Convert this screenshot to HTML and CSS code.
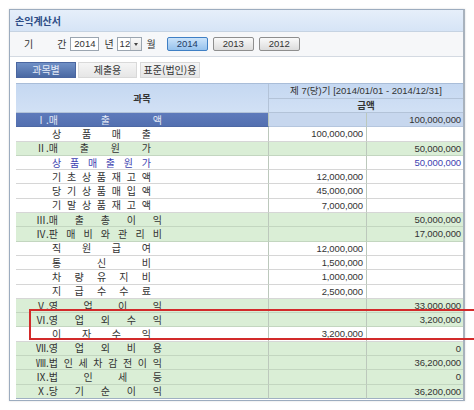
FILE: index.html
```html
<!DOCTYPE html>
<html lang="ko">
<head>
<meta charset="utf-8">
<title>손익계산서</title>
<link rel="stylesheet" href="styles.css">
</head>
<body>
<div class="panel">
  <div class="titlebar">손익계산서</div>
  <div class="toolbar">
    <span class="lab">기</span><span class="lab lab-gap">간</span>
    <span class="inp">2014</span>
    <span class="lab lab-y">년</span>
    <span class="sel"><span class="selv">12</span><span class="selbtn"><span class="tri"></span></span></span>
    <span class="lab lab-m">월</span>
    <button class="yb on">2014</button>
    <button class="yb">2013</button>
    <button class="yb">2012</button>
  </div>
  <div class="tabs">
    <div class="tab on">과목별</div>
    <div class="tab t2">제출용</div>
    <div class="tab t3">표준(법인)용</div>
  </div>
  <div class="tbl">
    <div class="thead">
      <div class="h-subj">과목</div>
      <div class="h-per">제 7(당)기 [2014/01/01 - 2014/12/31]</div>
      <div class="h-amt">금액</div>
    </div>
    <div class="row top"><div class="c1"><span class="lbl main"><span>Ⅰ.매</span><span>출</span><span>액</span></span></div><div class="c2"></div><div class="c3">100,000,000</div></div>
    <div class="row w"><div class="c1"><span class="lbl sub"><span>상</span><span>품</span><span>매</span><span>출</span></span></div><div class="c2">100,000,000</div><div class="c3"></div></div>
    <div class="row g"><div class="c1"><span class="lbl main short"><span>Ⅱ.매</span><span>출</span><span>원</span><span>가</span></span></div><div class="c2"></div><div class="c3">50,000,000</div></div>
    <div class="row w blue"><div class="c1"><span class="lbl sub"><span>상</span><span>품</span><span>매</span><span>출</span><span>원</span><span>가</span></span></div><div class="c2"></div><div class="c3">50,000,000</div></div>
    <div class="row w"><div class="c1"><span class="lbl sub"><span>기</span><span>초</span><span>상</span><span>품</span><span>재</span><span>고</span><span>액</span></span></div><div class="c2">12,000,000</div><div class="c3"></div></div>
    <div class="row w"><div class="c1"><span class="lbl sub"><span>당</span><span>기</span><span>상</span><span>품</span><span>매</span><span>입</span><span>액</span></span></div><div class="c2">45,000,000</div><div class="c3"></div></div>
    <div class="row w"><div class="c1"><span class="lbl sub"><span>기</span><span>말</span><span>상</span><span>품</span><span>재</span><span>고</span><span>액</span></span></div><div class="c2">7,000,000</div><div class="c3"></div></div>
    <div class="row g"><div class="c1"><span class="lbl main"><span>Ⅲ.매</span><span>출</span><span>총</span><span>이</span><span>익</span></span></div><div class="c2"></div><div class="c3">50,000,000</div></div>
    <div class="row g"><div class="c1"><span class="lbl main"><span>Ⅳ.판</span><span>매</span><span>비</span><span>와</span><span>관</span><span>리</span><span>비</span></span></div><div class="c2"></div><div class="c3">17,000,000</div></div>
    <div class="row w"><div class="c1"><span class="lbl sub"><span>직</span><span>원</span><span>급</span><span>여</span></span></div><div class="c2">12,000,000</div><div class="c3"></div></div>
    <div class="row w"><div class="c1"><span class="lbl sub"><span>통</span><span>신</span><span>비</span></span></div><div class="c2">1,500,000</div><div class="c3"></div></div>
    <div class="row w"><div class="c1"><span class="lbl sub"><span>차</span><span>량</span><span>유</span><span>지</span><span>비</span></span></div><div class="c2">1,000,000</div><div class="c3"></div></div>
    <div class="row w"><div class="c1"><span class="lbl sub"><span>지</span><span>급</span><span>수</span><span>수</span><span>료</span></span></div><div class="c2">2,500,000</div><div class="c3"></div></div>
    <div class="row g"><div class="c1"><span class="lbl main"><span>Ⅴ.영</span><span>업</span><span>이</span><span>익</span></span></div><div class="c2"></div><div class="c3">33,000,000</div></div>
    <div class="row g"><div class="c1"><span class="lbl main"><span>Ⅵ.영</span><span>업</span><span>외</span><span>수</span><span>익</span></span></div><div class="c2"></div><div class="c3">3,200,000</div></div>
    <div class="row w"><div class="c1"><span class="lbl sub"><span>이</span><span>자</span><span>수</span><span>익</span></span></div><div class="c2">3,200,000</div><div class="c3"></div></div>
    <div class="row g"><div class="c1"><span class="lbl main"><span>Ⅶ.영</span><span>업</span><span>외</span><span>비</span><span>용</span></span></div><div class="c2"></div><div class="c3">0</div></div>
    <div class="row g"><div class="c1"><span class="lbl main"><span>Ⅷ.법</span><span>인</span><span>세</span><span>차</span><span>감</span><span>전</span><span>이</span><span>익</span></span></div><div class="c2"></div><div class="c3">36,200,000</div></div>
    <div class="row g"><div class="c1"><span class="lbl main"><span>Ⅸ.법</span><span>인</span><span>세</span><span>등</span></span></div><div class="c2"></div><div class="c3">0</div></div>
    <div class="row g last"><div class="c1"><span class="lbl main"><span>Ⅹ.당</span><span>기</span><span>순</span><span>이</span><span>익</span></span></div><div class="c2"></div><div class="c3">36,200,000</div></div>
  </div>
</div>
<div class="mark"></div>
</body>
</html>
```
FILE: styles.css
```css
html, body {
  margin: 0;
  padding: 0;
  overflow: hidden;
}
body {
  position: relative;
  width: 474px;
  height: 410px;
  background: #fff;
  font-family: "Liberation Sans", "Noto Sans CJK KR", sans-serif;
  font-size: 10px;
  color: #333;
}
.panel {
  margin: 9px 0 0 9px;
  width: 453px;
  border: 1px solid #9cacbf;
  border-right: 2px solid #a8b2bd;
  box-shadow: 0 0 2px rgba(0, 0, 0, 0.15);
  background: #fff;
  overflow: hidden;
  padding-bottom: 1px;
}
.titlebar {
  height: 22px;
  box-sizing: border-box;
  background: linear-gradient(#e6effa, #d6e4f6);
  border-bottom: 1px solid #c6d3e2;
  padding-left: 5px;
  line-height: 21px;
  font-family: "Noto Sans CJK KR", sans-serif;
  font-weight: bold;
  font-size: 10px;
  color: #2d4c86;
}
.toolbar {
  height: 25px;
  box-sizing: border-box;
  border-bottom: 1px solid #d4dae2;
  background: #f6f7f9;
  display: flex;
  align-items: center;
  padding-left: 14px;
}
.lab {
  font-family: "Noto Sans CJK KR", sans-serif;
  font-size: 10px;
  line-height: 12px;
  color: #333;
}
.lab-gap { margin-left: 24px; }
.lab-y { margin-left: 5px; }
.lab-m { margin-left: 5px; }
.inp {
  margin-left: 4px;
  width: 29px;
  height: 14px;
  box-sizing: border-box;
  border: 1px solid #9ba5b0;
  background: #fff;
  text-align: center;
  line-height: 12px;
  font-size: 9.5px;
  color: #333;
}
.sel {
  margin-left: 3px;
  width: 25px;
  height: 14px;
  box-sizing: border-box;
  border: 1px solid #9ba5b0;
  background: #fff;
  display: flex;
}
.selv {
  flex: 1;
  padding-left: 2px;
  line-height: 12px;
  font-size: 9.5px;
  color: #333;
}
.selbtn {
  width: 11px;
  border-left: 1px solid #c2c8cf;
  background: linear-gradient(#fafafa, #e4e4e4);
  display: flex;
  align-items: center;
  justify-content: center;
}
.tri {
  width: 0;
  height: 0;
  border-left: 2px solid transparent;
  border-right: 2px solid transparent;
  border-top: 3px solid #444;
}
.yb {
  width: 41px;
  height: 14px;
  margin: 0 0 0 5px;
  padding: 0;
  box-sizing: border-box;
  border: 1px solid #8e8e8e;
  border-radius: 2px;
  background: linear-gradient(#fafafa, #dcdcdc);
  font-family: "Liberation Sans", sans-serif;
  font-size: 9.5px;
  line-height: 12px;
  color: #333;
}
.yb.on {
  margin-left: 11px;
  border-color: #3f7fc4;
  background: linear-gradient(#cbe3fa, #96c2ed);
  color: #1d3b66;
}
.tabs {
  display: flex;
  margin: 5px 0 0 6px;
  height: 16px;
}
.tab {
  width: 60px;
  height: 16px;
  box-sizing: border-box;
  border: 1px solid #d9d9d9;
  background: linear-gradient(#f5f5f5, #e6e6e6);
  text-align: center;
  line-height: 14px;
  font-family: "Noto Sans CJK KR", sans-serif;
  font-size: 10px;
  color: #333;
}
.tab.on {
  border-color: #4a66a0;
  background: linear-gradient(#7090c6, #4a69a3);
  color: #e6ecf8;
}
.tab.t2 { margin-left: 2px; width: 59px; }
.tab.t3 { margin-left: 3px; }
.tbl {
  margin: 5px 0 0 6px;
  width: 447px;
}
.thead {
  display: grid;
  grid-template-columns: 253px 194px;
  grid-template-rows: 15px 14px;
  background: linear-gradient(#c5d8f1, #d2e1f5);
  border-top: 1px solid #a9bdd8;
  box-sizing: border-box;
  font-family: "Noto Sans CJK KR", sans-serif;
  color: #333;
}
.h-subj {
  grid-row: 1 / 3;
  border-right: 1px solid #b3c3d8;
  border-bottom: 1px solid #b3c3d8;
  display: flex;
  align-items: center;
  justify-content: center;
  font-weight: bold;
  font-size: 9.5px;
}
.h-per {
  border-bottom: 1px solid #b3c3d8;
  text-align: center;
  line-height: 13px;
  font-family: "Liberation Sans", "Noto Sans CJK KR", sans-serif;
  font-size: 9.5px;
}
.h-amt {
  border-bottom: 1px solid #b3c3d8;
  text-align: center;
  line-height: 13px;
  font-weight: bold;
  font-size: 9.5px;
}
.row {
  display: grid;
  grid-template-columns: 253px 98px 96px;
  height: 14.3px;
}
.row > div {
  box-sizing: border-box;
  border-bottom: 1px solid #d6d6d6;
  height: 14.3px;
}
.c1, .c2 {
  border-right: 1px solid #bcc8bc;
}
.c2, .c3 {
  text-align: right;
  font-family: "Liberation Sans", sans-serif;
  font-size: 9.5px;
  letter-spacing: -0.1px;
  line-height: 13px;
  color: #333;
}
.c2 { padding-right: 3px; }
.c3 { padding-right: 2px; }
.c1 {
  display: flex;
  align-items: center;
}
.lbl {
  display: flex;
  justify-content: space-between;
  font-family: "Noto Sans CJK KR", sans-serif;
  font-size: 10px;
  line-height: 12px;
  color: #333;
}
.lbl.main { margin-left: 20px; width: 126px; }
.lbl.main.short { width: 115px; }
.lbl.sub { margin-left: 36px; width: 99px; }
.row.w > div { background: #fff; }
.row.g > div { background: #daeed6; border-bottom-color: #c3d6c0; }
.row.top .c1 {
  background: linear-gradient(#5e7abb, #5370b0);
  border-bottom-color: #4d68a4;
}
.row.top .c1 .lbl { color: #e3e9f6; }
.row.top .c2, .row.top .c3 {
  background: #c7d7ee;
  border-bottom-color: #b5c6de;
}
.row.blue .lbl, .row.blue .c3 { color: #3d3fb0; }
.row.last > div { border-bottom: 1px solid #9fb0c2; }
.mark {
  position: absolute;
  left: 29px;
  top: 309px;
  width: 445px;
  height: 31px;
  box-sizing: border-box;
  border: 2px solid #d22a2a;
  border-right: none;
}
```
